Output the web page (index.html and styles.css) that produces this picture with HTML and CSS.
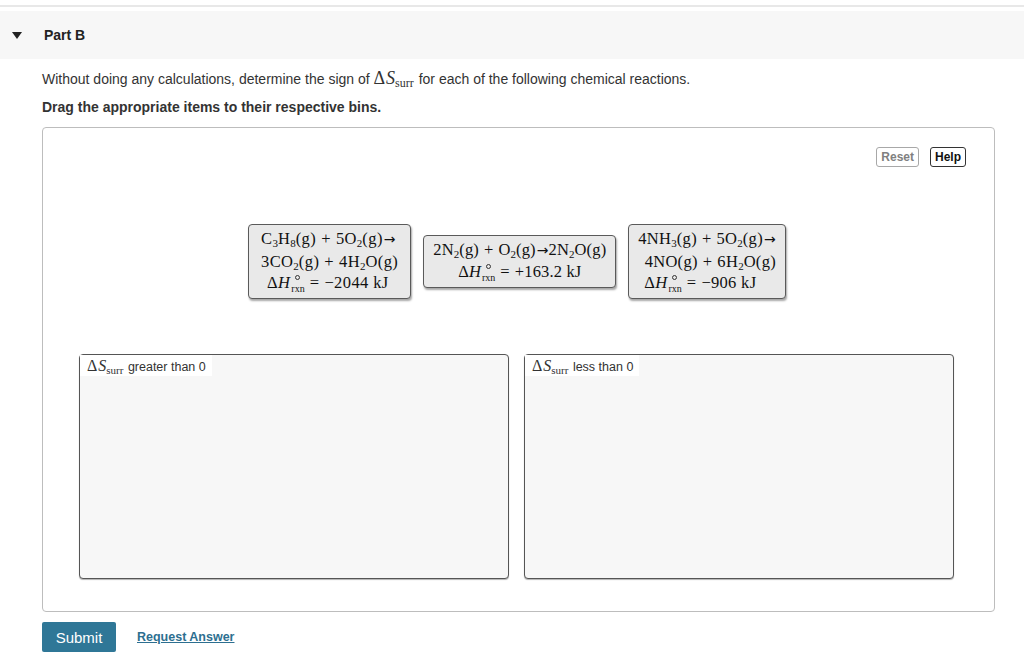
FILE: index.html
```html
<!DOCTYPE html>
<html>
<head>
<meta charset="utf-8">
<link rel="stylesheet" href="styles.css">
</head>
<body>
<div class="topline"></div>
<div class="header">
  <span class="caret"></span>
  <span class="part">Part B</span>
</div>
<div class="content">
  <p class="instr">Without doing any calculations, determine the sign of <span class="m">Δ<i>S</i><sub>surr</sub></span> for each of the following chemical reactions.</p>
  <p class="drag">Drag the appropriate items to their respective bins.</p>
  <div class="panel">
    <div class="tools">
      <button class="btn reset">Reset</button>
      <button class="btn help">Help</button>
    </div>
    <div class="cards">
      <div class="card c1">
        <div class="ln l1">C<sub>3</sub>H<sub>8</sub>(g)<span class="op">+</span>5O<sub>2</sub>(g)<span class="ar">→</span></div>
        <div class="ln l2">3CO<sub>2</sub>(g)<span class="op">+</span>4H<sub>2</sub>O(g)</div>
        <div class="ln l3">Δ<i>H</i><span class="ss"><span class="deg"></span><span>rxn</span></span><span class="op">=</span>−2044 kJ</div>
      </div>
      <div class="card c2">
        <div class="ln">2N<sub>2</sub>(g)<span class="op">+</span>O<sub>2</sub>(g)<span class="ar">→</span>2N<sub>2</sub>O(g)</div>
        <div class="ln">Δ<i>H</i><span class="ss"><span class="deg"></span><span>rxn</span></span><span class="op">=</span>+163.2 kJ</div>
      </div>
      <div class="card c3">
        <div class="ln l1">4NH<sub>3</sub>(g)<span class="op">+</span>5O<sub>2</sub>(g)<span class="ar">→</span></div>
        <div class="ln l2">4NO(g)<span class="op">+</span>6H<sub>2</sub>O(g)</div>
        <div class="ln l3">Δ<i>H</i><span class="ss"><span class="deg"></span><span>rxn</span></span><span class="op">=</span>−906 kJ</div>
      </div>
    </div>
    <div class="bins">
      <div class="bin"><div class="label"><span class="m">Δ<i>S</i><sub>surr</sub></span> greater than 0</div></div>
      <div class="bin"><div class="label"><span class="m">Δ<i>S</i><sub>surr</sub></span> less than 0</div></div>
    </div>
  </div>
  <div class="actions">
    <button class="submit">Submit</button>
    <a class="request" href="#">Request Answer</a>
  </div>
</div>
</body>
</html>
```
FILE: styles.css
```css
* { box-sizing: border-box; }
body {
  margin: 0;
  font-family: "Liberation Sans", Arial, sans-serif;
  color: #333;
  background: #fff;
}
.topline {
  margin-top: 5px;
  height: 2px;
  background: #e8e8e8;
}
.header {
  margin-top: 4px;
  height: 48px;
  background: #f7f7f7;
  display: flex;
  align-items: center;
  padding-left: 12px;
}
.caret {
  width: 0; height: 0;
  border-left: 5px solid transparent;
  border-right: 5px solid transparent;
  border-top: 7px solid #222;
  margin-right: 22px;
}
.part {
  font-weight: bold;
  font-size: 14px;
  color: #222;
}
.content {
  padding: 0 29px 0 42px;
}
.instr {
  margin: 9px 0 0;
  font-size: 14px;
  line-height: 20px;
}
.m {
  font-family: "Liberation Serif", "Times New Roman", serif;
  font-size: 18px;
  margin-right: 1px;
}
.m i { margin-left: 1px; }
.m sub {
  font-size: 12px;
  vertical-align: -3px;
  line-height: 0;
}
.drag {
  margin: 8px 0 0;
  font-size: 14px;
  font-weight: bold;
  line-height: 20px;
}
.panel {
  margin-top: 10px;
  border: 1px solid #bdbdbd;
  border-radius: 4px;
  height: 485px;
  padding: 19px 28px 0 36px;
}
.tools {
  display: flex;
  justify-content: flex-end;
  gap: 11px;
}
.btn {
  font-family: "Liberation Sans", Arial, sans-serif;
  font-weight: bold;
  font-size: 12px;
  height: 20px;
  padding: 0 4px;
  background: #fff;
  border-radius: 3px;
}
.reset { border: 1px solid #a8a8a8; color: #808080; }
.help { border: 1px solid #333; color: #111; }
.cards {
  margin-top: 57px;
  display: flex;
  justify-content: center;
  align-items: center;
  gap: 12px;
  padding-right: 11px;
}
.card {
  background: #e9e9e9;
  border: 1.5px solid #5a5a5a;
  border-radius: 4px;
  box-shadow: 1px 2px 2px rgba(0,0,0,0.35);
  padding: 3px 11px 4px;
  font-family: "Liberation Serif", "Times New Roman", serif;
  font-size: 16.5px;
  letter-spacing: 0.4px;
  color: #111;
  text-align: center;
}
.c1 { padding-left: 12px; padding-right: 12px; }
.c2 { letter-spacing: 0.15px; padding-left: 9px; padding-right: 9px; }
.c3 { letter-spacing: 0.3px; padding-left: 9px; padding-right: 9px; }
.ln { line-height: 21.5px; white-space: nowrap; }
.ln sub { font-size: 11px; vertical-align: -3px; line-height: 0; letter-spacing: 0; }
.op { margin: 0 5px; }
.ar {
  font-family: "DejaVu Sans", sans-serif;
  font-size: 14px;
  margin-left: 1px;
}
.ss {
  display: inline-block;
  vertical-align: -4px;
  font-size: 10px;
  line-height: 10px;
  margin-left: 1px;
  letter-spacing: 0;
}
.ss span { display: block; text-align: left; }
.ss .deg {
  width: 5px;
  height: 5px;
  border: 1px solid #333;
  border-radius: 50%;
  margin: 0 0 4px 4px;
}
.l1 { text-align: left; }
.l2 { text-align: right; }
.l3 { text-align: left; padding-left: 6px; }
.bins {
  margin-top: 55px;
  display: flex;
  gap: 15px;
}
.bin {
  width: 430px;
  height: 225px;
  background: #f7f7f7;
  border: 1.5px solid #555;
  border-radius: 4px;
  box-shadow: 0 1px 1px rgba(0,0,0,0.3);
}
.label {
  display: inline-block;
  background: #fff;
  padding: 2px 6px 0 7px;
  font-size: 12.5px;
  color: #333;
  line-height: 18px;
}
.label .m { font-size: 16px; }
.label .m sub { font-size: 11px; }
.actions {
  margin-top: 10px;
  display: flex;
  align-items: center;
  gap: 21px;
}
.submit {
  width: 74px;
  height: 30px;
  background: #2f7797;
  color: #fff;
  border: none;
  border-radius: 2px;
  font-family: "Liberation Sans", Arial, sans-serif;
  font-size: 15px;
}
.request {
  color: #2d6f90;
  font-weight: bold;
  font-size: 12.5px;
  text-decoration: underline;
}
```
